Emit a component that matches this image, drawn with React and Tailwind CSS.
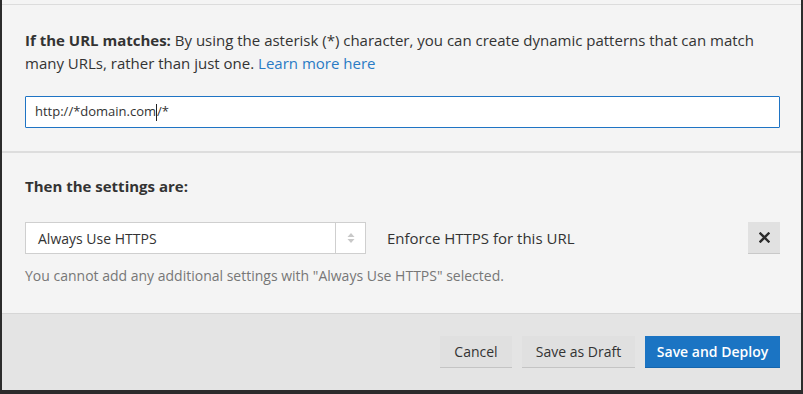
import React from 'react';

const font = { fontFamily: '"Open Sans", "Liberation Sans", sans-serif' };

function Arrows() {
  return (
    <svg width="8" height="12" viewBox="0 0 8 12">
      <path d="M4 1 L7.5 5 L0.5 5 Z" fill="#c8c8c8" />
      <path d="M4 11 L7.5 7 L0.5 7 Z" fill="#c8c8c8" />
    </svg>
  );
}

function Cross() {
  return (
    <svg width="11" height="11" viewBox="0 0 11 11">
      <path d="M1.5 1.5 L9.5 9.5 M9.5 1.5 L1.5 9.5" stroke="#2b2b2b" strokeWidth="2.4" strokeLinecap="square" />
    </svg>
  );
}

export default function App() {
  return (
    <div className="w-[803px] h-[394px] bg-[#2c2c2c] overflow-hidden" style={font}>
      <div className="ml-[2px] w-[799px] h-[390px] bg-[#f4f4f4] flex flex-col pt-[4px]">
        <div className="border-t border-[#dcdcdc] px-[23px] pr-[21px] pt-[24px] pb-[23px]">
          <p className="text-[15px] leading-[23px] text-[#333]">
            <span className="font-bold">If the URL matches:</span> By using the asterisk (*) character, you can create dynamic patterns that can match many URLs, rather than just one.{' '}
            <a className="text-[#2a7bc4]">Learn more here</a>
          </p>
          <div className="mt-[21px] h-[32px] bg-white border border-[#1f74c4] rounded-[1px] flex items-center px-[9px] text-[13px] text-[#333]">
            http://*domain.com<span className="inline-block w-[1px] h-[17px] bg-[#222]"></span>/*
          </div>
        </div>

        <div className="border-t-2 border-[#dddddd] px-[23px] pr-[21px] pt-[22px] pb-[27px]">
          <h3 className="text-[15px] leading-[23px] font-bold text-[#333]">Then the settings are:</h3>
          <div className="mt-[24px] flex items-center">
            <div className="w-[341px] h-[32px] bg-white border border-[#cfcfcf] flex">
              <div className="flex-1 flex items-center pl-[12px] text-[14px] text-[#333]">Always Use HTTPS</div>
              <div className="w-[30px] border-l border-[#cfcfcf] flex items-center justify-center">
                <Arrows />
              </div>
            </div>
            <span className="ml-[21px] text-[15px] text-[#333]">Enforce HTTPS for this URL</span>
            <button className="ml-auto w-[32px] h-[32px] bg-[#e1e1e1] border-b border-[#c9c9c9] flex items-center justify-center -mt-[1px]">
              <Cross />
            </button>
          </div>
          <p className="mt-[11px] text-[14px] leading-[21px] text-[#777]">
            You cannot add any additional settings with "Always Use HTTPS" selected.
          </p>
        </div>

        <div className="flex-1 bg-[#e4e4e4] border-t border-[#d6d6d6] flex justify-end items-start pt-[22px] pr-[21px] gap-[10px]">
          <button className="h-[32px] w-[72px] bg-[#e0e0e0] border-b border-[#c4c4c4] text-[14px] text-[#333]">Cancel</button>
          <button className="h-[32px] w-[113px] bg-[#e0e0e0] border-b border-[#c4c4c4] text-[14px] text-[#333]">Save as Draft</button>
          <button className="h-[32px] w-[135px] bg-[#1b74c3] border-b border-[#1565ad] text-[14px] font-semibold text-white">Save and Deploy</button>
        </div>
      </div>
    </div>
  );
}
